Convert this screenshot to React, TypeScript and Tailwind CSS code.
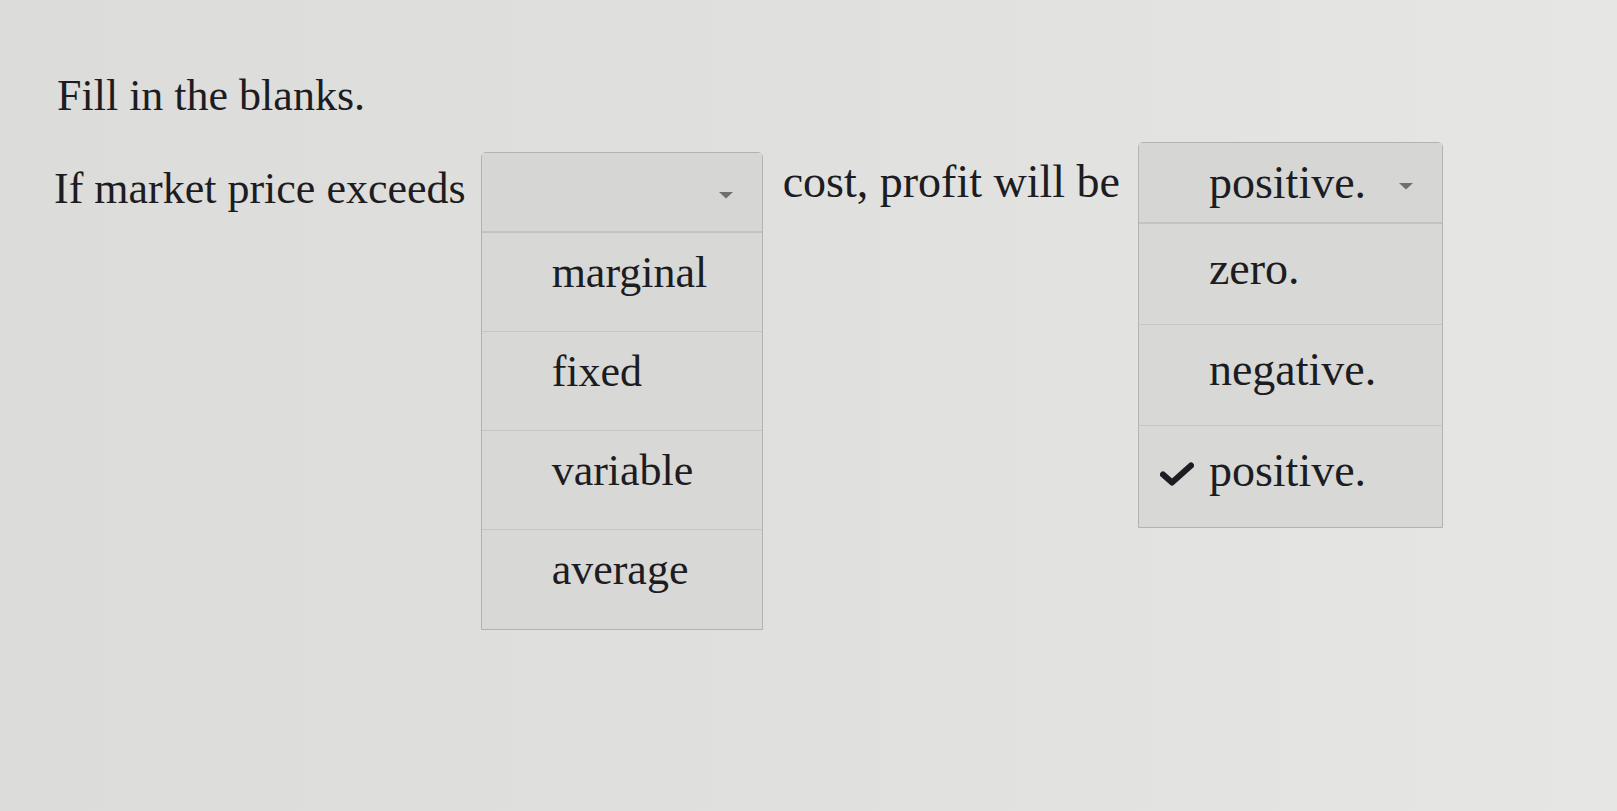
import React from "react";

const Arrow = () => (
  <svg width="16" height="8" viewBox="0 0 16 8" className="mt-[6px] shrink-0">
    <path d="M1 1 L15 1 L8 7.5 Z" fill="#6f6f70" />
  </svg>
);

const Check = () => (
  <svg width="34" height="24" viewBox="0 0 34 24">
    <path
      d="M3 12.5 L12 20.5 L31 3.5"
      fill="none"
      stroke="#1c1c22"
      strokeWidth="6"
      strokeLinecap="round"
      strokeLinejoin="round"
    />
  </svg>
);

type Option = { label: string; checked?: boolean };

const Dropdown = ({
  value,
  options,
  box,
  head,
  row,
}: {
  value?: string;
  options: Option[];
  box: string;
  head: string;
  row: string;
}) => (
  <div className={`${box} shrink-0 rounded-t-[5px] border border-[#b3b3b1] bg-[#d8d8d6]`}>
    <div className={`${head} flex items-center border-b-2 border-[#c3c3c1] bg-[#d6d6d4] pl-[70px] pr-[28px]`}>
      <span className="flex-1 leading-[50px]">{value ?? "\u00a0"}</span>
      <Arrow />
    </div>
    {options.map((o, i) => (
      <div
        key={o.label}
        className={`${row} flex items-start pl-[21px] ${
          i < options.length - 1 ? "border-b border-[#c6c6c4]" : ""
        }`}
      >
        <span className="flex h-[50px] w-[49px] items-center pt-[6px]">{o.checked && <Check />}</span>
        <span className="leading-[50px]">{o.label}</span>
      </div>
    ))}
  </div>
);

export default function App() {
  return (
    <div
      className="h-[811px] w-[1617px] overflow-hidden bg-gradient-to-r from-[#dcdcda] via-[#e0e0de] to-[#e6e6e4] text-[44px] text-[#1c1c22]"
      style={{ fontFamily: '"Liberation Serif", "Times New Roman", serif' }}
    >
      <div className="pl-[57px] pt-[71px] leading-[50px]">Fill in the blanks.</div>

      <div className="mt-[31px] flex items-start pl-[54px]">
        <span className="mt-[12px] whitespace-nowrap leading-[50px]">If market price exceeds</span>
        <div className="ml-[15px]">
          <Dropdown
            box="w-[282px]"
            head="h-[80px]"
            row="h-[99px] pt-[15px]"
            options={[
              { label: "marginal" },
              { label: "fixed" },
              { label: "variable" },
              { label: "average" },
            ]}
          />
        </div>
        <span className="ml-[20px] mt-[5px] whitespace-nowrap text-[46px] leading-[50px]">cost, profit will be</span>
        <div className="-mt-[10px] ml-[18px] text-[46px]">
          <Dropdown
            box="w-[305px]"
            head="h-[81px]"
            row="h-[101px] pt-[20px]"
            value="positive."
            options={[
              { label: "zero." },
              { label: "negative." },
              { label: "positive.", checked: true },
            ]}
          />
        </div>
      </div>
    </div>
  );
}
